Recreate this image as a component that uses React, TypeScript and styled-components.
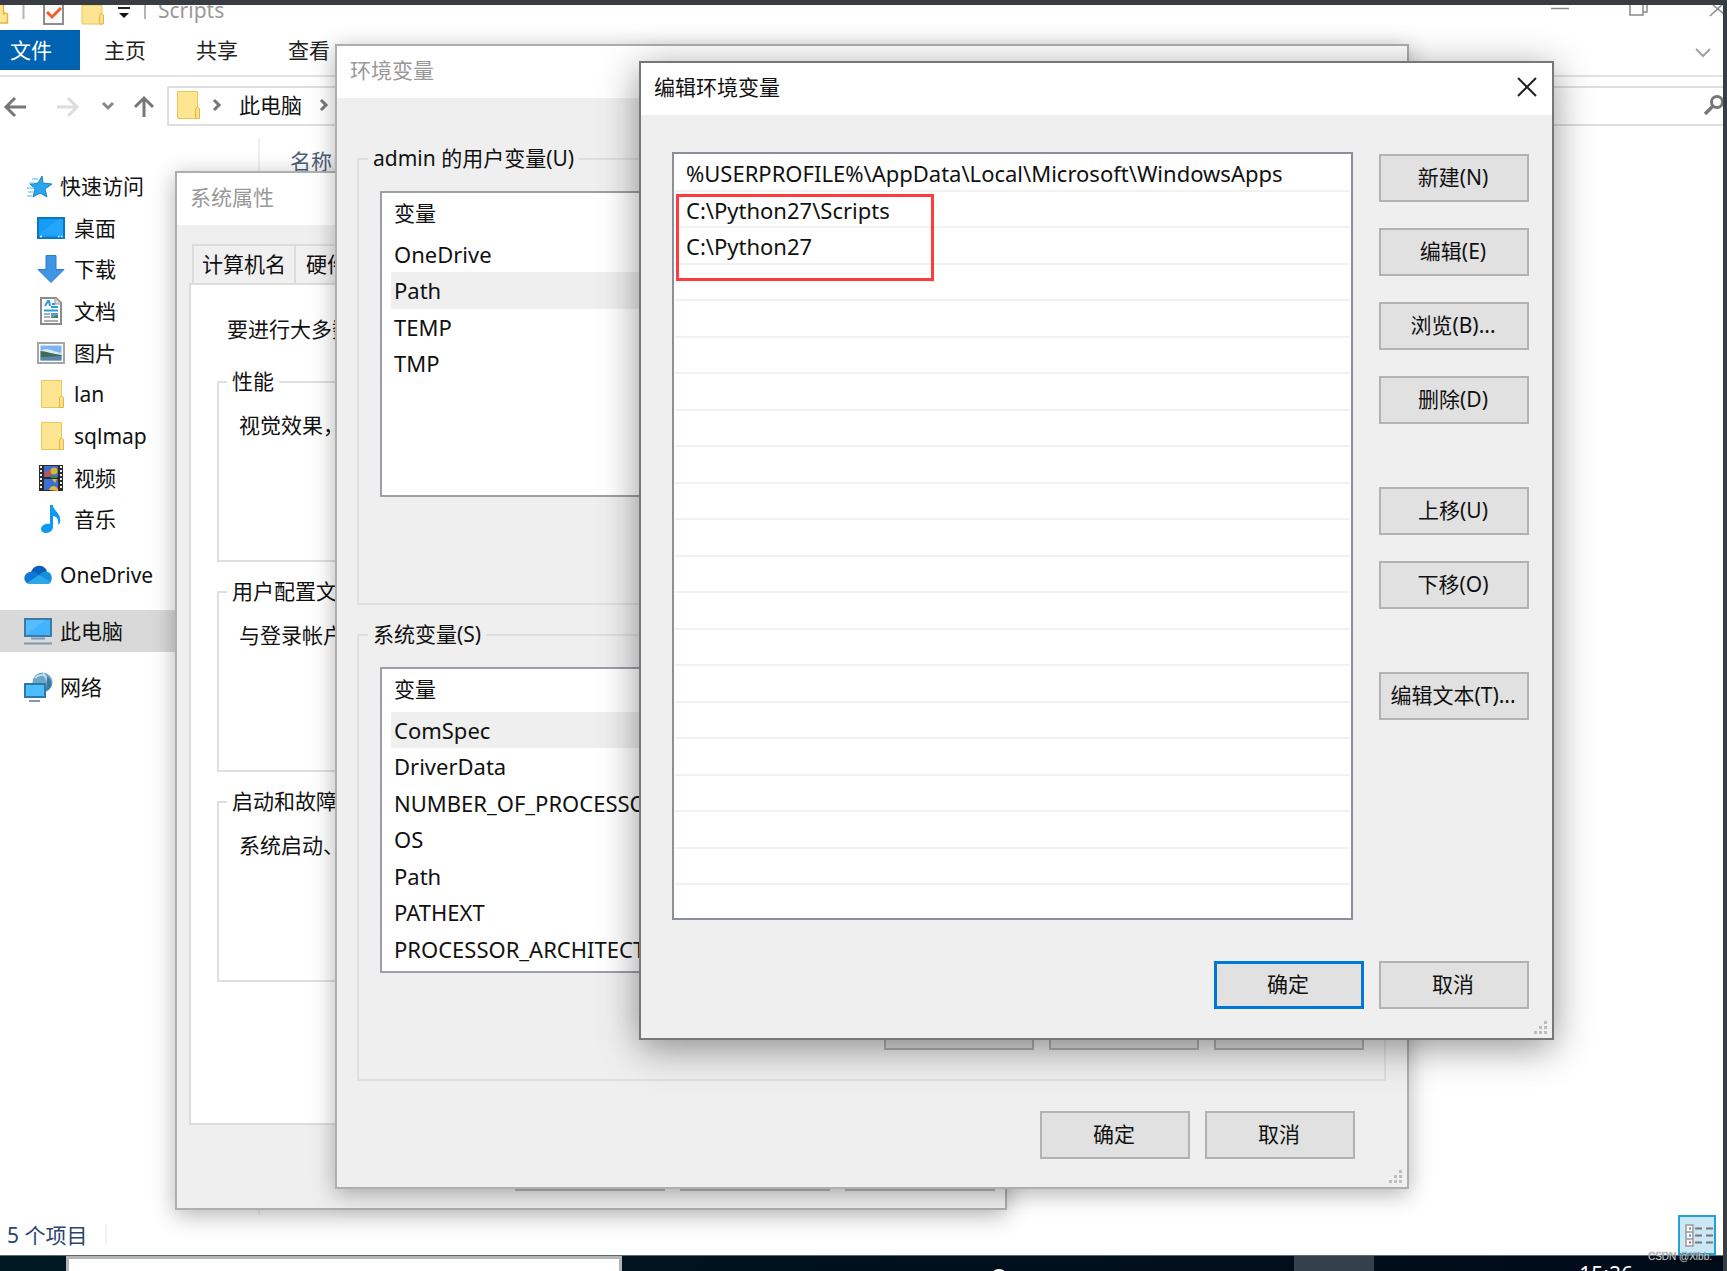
import React from "react";
import styled, { createGlobalStyle, css } from "styled-components";

const ui = `"Noto Sans", "Noto Sans CJK SC", sans-serif`;

const GlobalStyle = createGlobalStyle`
  * { box-sizing: border-box; }
  html, body, #root { height: 100%; }
  body {
    margin: 0;
    overflow: hidden;
    background: #373d42;
    color: #111;
    font-family: ${ui};
    font-size: 21px;
    line-height: 30px;
  }
  button, input { font: inherit; color: inherit; }
  ul { list-style: none; margin: 0; padding: 0; }
`;

const Desktop = styled.div`
  position: relative;
  display: flex;
  flex-direction: column;
  height: 100vh;
  padding: 5px 4px 0 0;
  overflow: hidden;
`;

/* ---------- Explorer ---------- */

const Explorer = styled.main`
  flex: 1;
  min-height: 0;
  display: flex;
  flex-direction: column;
  background: #fff;
  overflow: hidden;
`;

const CaptionBar = styled.header`
  flex: none;
  display: flex;
  height: 25px;
  overflow: hidden;
`;

const CaptionLeft = styled.div`
  flex: 1;
  display: flex;
  align-items: flex-start;
  svg { display: block; }
`;

const CaptionTitle = styled.h1`
  margin: -10px 0 0 12px;
  font-size: 21px;
  font-weight: 400;
  line-height: 30px;
  color: #999;
`;

const RibbonTabs = styled.nav`
  flex: none;
  display: flex;
  height: 47px;
  padding-right: 12px;
  border-bottom: 2px solid #e2e2e2;
  svg { margin: 18px 0 0 auto; }
`;

const RibbonTab = styled.button<{ $file?: boolean }>`
  width: ${(p) => (p.$file ? 80 : 92)}px;
  height: 40px;
  padding: 0;
  padding-right: ${(p) => (p.$file ? 18 : 2)}px;
  border: 0;
  background: ${(p) => (p.$file ? "#0063b1" : "none")};
  color: ${(p) => (p.$file ? "#fff" : "#222")};
`;

const AddressRow = styled.div`
  flex: none;
  display: flex;
  align-items: center;
  padding: 9px 0 0;
`;

const NavButtons = styled.div`
  display: flex;
  width: 167px;
  svg { display: block; }
`;

const AddressBar = styled.div`
  flex: 1;
  display: flex;
  align-items: center;
  gap: 17px;
  height: 40px;
  padding: 0 0 2px 4px;
  border: 2px solid #dedede;
  border-right: 0;
  svg:first-child { margin-right: -6px; }
  svg:last-child { margin-left: auto; }
`;

const ExplorerBody = styled.div`
  flex: 1;
  min-height: 0;
  display: flex;
`;

const Sidebar = styled.nav`
  width: 258px;
  padding-top: 39px;
  display: flex;
  flex-direction: column;
  gap: 14px;
`;

const QuickAccess = styled.ul`
  display: grid;
  grid-auto-rows: 1fr;
  height: 375px;
`;

const SideItem = styled.a<{ $child?: boolean; $active?: boolean }>`
  display: flex;
  align-items: center;
  gap: ${(p) => (p.$child ? 9 : 7)}px;
  height: 100%;
  min-height: ${(p) => (p.$child ? 41 : 42)}px;
  padding-left: ${(p) => (p.$child ? 37 : 23)}px;
  background: ${(p) => (p.$active ? "#d9d9d9" : "none")};
  color: inherit;
  text-decoration: none;
  svg { flex: none; }
`;

const FilePane = styled.section`
  flex: 1;
  margin: 12px 0 0;
  padding: 8px 30px;
  border-left: 2px solid #f0f0f0;
  color: #4c607a;
`;

const StatusBar = styled.footer`
  flex: none;
  display: flex;
  align-items: center;
  height: 40px;
  padding: 0 7px;
  color: #2b4470;
`;

const StatusCount = styled.span`
  padding-right: 18px;
  border-right: 2px solid #f2f2f2;
  line-height: 20px;
`;

const ViewToggle = styled.button`
  width: 38px;
  height: 40px;
  margin-left: auto;
  padding: 0;
  border: 2px solid #26a0da;
  background: #cce8f6;
  svg { display: block; }
`;

/* ---------- Taskbar ---------- */

const Taskbar = styled.footer`
  flex: none;
  display: flex;
  height: 16px;
  padding-left: 66px;
  overflow: hidden;
  background: linear-gradient(90deg, #001822, #000b18);
  border-top: 1px solid #5c6a72;
`;

const SearchBox = styled.input`
  width: 556px;
  height: 40px;
  border: 3px solid #b5b5b5;
  background: #fff;
`;

const TaskbarOrb = styled.span`
  width: 18px;
  height: 18px;
  margin: 13px 284px 0 368px;
  border: 2px solid #fff;
  border-radius: 50%;
`;

const TaskbarApp = styled.span`
  width: 80px;
  height: 40px;
  margin-left: 2px;
  background: #34404b;
`;

const Clock = styled.time`
  margin: 3px 90px 0 auto;
  color: #fff;
  font-size: 21px;
  line-height: 30px;
`;

const Watermark = styled.span`
  position: absolute;
  right: 15px;
  bottom: 7px;
  color: #c4c8ca;
  font-family: "Liberation Sans", sans-serif;
  font-size: 10px;
  line-height: 14px;
  text-shadow: 0 0 1px #444;
`;

/* ---------- Dialog windows ---------- */

const Dialog = styled.section<{ $x: number; $y: number; $w: number; $h: number; $active?: boolean }>`
  position: absolute;
  left: ${(p) => p.$x}px;
  top: ${(p) => p.$y}px;
  width: ${(p) => p.$w}px;
  height: ${(p) => p.$h}px;
  display: flex;
  flex-direction: column;
  background: #efefef;
  border: 2px solid ${(p) => (p.$active ? "#777" : "#aeaeae")};
  box-shadow: ${(p) =>
    p.$active ? "0 8px 36px rgba(0,0,0,.42)" : "0 5px 22px rgba(0,0,0,.3)"};
`;

const TitleBar = styled.header<{ $active?: boolean }>`
  flex: none;
  display: flex;
  align-items: center;
  justify-content: space-between;
  height: 52px;
  padding: 0 15px 4px 13px;
  background: #fff;
  color: ${(p) => (p.$active ? "#111" : "#999")};
`;

const DialogTitle = styled.h2`
  margin: 0;
  font-size: 21px;
  line-height: 30px;
  font-weight: 400;
`;

const CloseButton = styled.button`
  padding: 0;
  border: 0;
  background: none;
  svg { display: block; }
`;

const PushButton = styled.button<{ $primary?: boolean }>`
  flex: none;
  width: 150px;
  height: 48px;
  padding: 0 2px 2px 0;
  background: #e1e1e1;
  border: ${(p) => (p.$primary ? "3px solid #0078d7" : "2px solid #b2b2b2")};
`;

const ButtonRow = styled.div`
  display: flex;
  justify-content: flex-end;
  gap: 15px;
`;

const group = css`
  position: relative;
  margin: 0;
  min-width: 0;
  border: 2px solid #dfdfdf;
`;

const Legend = styled.legend`
  padding: 0 5px 2px;
  line-height: 28px;
`;

const Grip = styled.svg`
  position: absolute;
  right: 4px;
  bottom: 2px;
`;

/* System properties */

const TabStrip = styled.div`
  display: flex;
  margin: 19px 0 0 15px;
`;

const Tab = styled.button`
  height: 39px;
  padding: 0 8px 2px;
  background: #f0f0f0;
  border: 2px solid #dcdcdc;
  border-bottom: 0;
  & + & { border-left: 0; padding-left: 10px; }
`;

const TabPanel = styled.div`
  height: 842px;
  margin: 0 12px 18px;
  padding: 29px 24px 0 26px;
  background: #fff;
  border: 2px solid #dcdcdc;
`;

const PanelNote = styled.p`
  margin: 0 0 23px 10px;
`;

const SettingsGroup = styled.fieldset`
  ${group}
  height: 195px;
  margin-bottom: 15px;
  padding: 13px 20px 0;
  ${Legend} { margin-left: -12px; }
`;

const DialogFooter = styled.div`
  padding-right: 10px;
`;

/* Environment variables */

const EnvBody = styled.div`
  flex: 1;
  padding: 46px 21px 0 20px;
`;

const VariableGroup = styled.fieldset`
  ${group}
  height: 461px;
  margin-bottom: 15px;
  padding: 17px 20px 0 21px;
  ${Legend} { margin-left: -12px; }
`;

const VariableFrame = styled.div`
  height: 306px;
  margin-bottom: 29px;
  padding-left: 9px;
  background: #fff;
  border: 2px solid #9a9fa8;
`;

const VariableTable = styled.table`
  display: block;
  thead, tr { display: block; }
  tbody {
    display: grid;
    grid-template-rows: repeat(7, 1fr);
    height: 255px;
  }
  th, td { display: block; padding: 0 3px; text-align: left; font-weight: 400; }
  th { padding-bottom: 2px; line-height: 41px; }
  td { font-size: 22px; line-height: 36px; }
`;

const VariableRow = styled.tr<{ $selected?: boolean }>`
  background: ${(p) => (p.$selected ? "#efefef" : "none")};
`;

const EnvFooter = styled(ButtonRow)`
  padding: 0 52px 28px 0;
`;

/* Edit environment variable */

const EditBody = styled.div`
  flex: 1;
  display: flex;
  gap: 26px;
  padding: 37px 23px 0 31px;
`;

const PathList = styled.ul`
  position: relative;
  flex: 1;
  display: grid;
  grid-template-rows: repeat(20, 1fr);
  height: 768px;
  padding: 1px 1px 33px;
  background: #fff;
  border: 2px solid #8a8f9a;
`;

const PathItem = styled.li`
  padding-left: 11px;
  border-bottom: 2px solid #f1f1f1;
  font-size: 22px;
  line-height: 36px;
  min-height: 0;
`;

const Highlight = styled.span`
  position: absolute;
  left: 2px;
  top: 40px;
  width: 258px;
  height: 87px;
  border: 3px solid #ff3b3b;
`;

const ActionColumn = styled.div`
  display: flex;
  flex-direction: column;
  gap: 63px;
  padding-top: 2px;
`;

const ActionGroup = styled.div`
  display: flex;
  flex-direction: column;
  gap: 26px;
`;

const EditFooter = styled(ButtonRow)`
  padding: 0 23px 29px 0;
`;

/* ---------- Icons ---------- */

const Folder = () => (
  <svg width="28" height="28" viewBox="0 0 28 28">
    <path d="M4.500 .5h20v27h-20z" fill="#ffe491" stroke="#eac65a" />
    <path d="M22.500 17.500l2-1.500 2 1.500v10h-4z" fill="#ffe08a" stroke="#e2b840" />
  </svg>
);

const Star = () => (
  <svg width="30" height="24" viewBox="0 0 30 24">
    <path d="M19 2l1 7 9 1-7 5 2 8-7-4-7 4 2-8-5-5 8-1z" fill="#2aa4ea" stroke="#1787cc" />
    <path d="M9 5h6M6 9h5M4 14h7M5 18h6M4 22h5" stroke="#8ccdf4" strokeWidth="1.500" />
  </svg>
);

const DesktopIcon = () => (
  <svg width="28" height="22" viewBox="0 0 28 22">
    <path d="M1 1h26v20H1z" fill="#159df5" stroke="#0878bd" strokeWidth="2" />
    <path d="M2 17L22 2h4v16H2z" fill="#2faaff" opacity=".6" />
    <path d="M3 19.500h2M21 19.500h1.500M24 19.500h1.500" stroke="#fff" strokeWidth="1.500" />
  </svg>
);

const Download = () => (
  <svg width="28" height="28" viewBox="0 0 28 28">
    <path d="M9 .5h10v14h8L14 27.500 1 14.500h8z" fill="#3d95e4" stroke="#2a7fcd" />
  </svg>
);

const Doc = () => (
  <svg width="28" height="28" viewBox="0 0 28 28">
    <path d="M4 1h15l5 5v21H4z" fill="#fdfdfd" stroke="#8b8b8b" strokeWidth="2" />
    <path d="M18 1v6h6" fill="#ddd" stroke="#999" />
    <path d="M8 9l3-5h1l1 5M15 7h3M14 10h7M7 13.500h14" stroke="#2a9bdc" strokeWidth="2" fill="none" />
    <path d="M7 17h6M7 20h6M7 24h14" stroke="#8a949c" strokeWidth="1.500" />
    <path d="M14 16h7v5h-7z" fill="#5d9cc7" />
    <path d="M14 21l7-3v3z" fill="#3f7d55" />
  </svg>
);

const Picture = () => (
  <svg width="28" height="22" viewBox="0 0 28 22">
    <path d="M1 1h26v20H1z" fill="#fff" stroke="#a5a5a5" strokeWidth="2" />
    <path d="M3.500 3.500h21v15h-21z" fill="#7fb4f0" />
    <path d="M3.500 9c6-4 11 0 21 2v3h-21z" fill="#d7ebf5" />
    <path d="M3.500 9c5 0 12 3 21 4v2h-21z" fill="#3d6b58" />
    <path d="M3.500 15l21-1v4.500h-21z" fill="#5a86a8" />
  </svg>
);

const Film = () => (
  <svg width="28" height="28" viewBox="0 0 28 28">
    <path d="M2 1h24v26H2z" fill="#2b2b2b" />
    <path d="M4 2v24M24 2v24" stroke="#eee" strokeWidth="2" strokeDasharray="2 2" />
    <path d="M7 2h14v11H7zM7 15h14v11H7z" fill="#3d6fd1" />
    <path d="M8 8l5-2 2 5-7 2z" fill="#c8504a" />
    <circle cx="17" cy="7" r="3.500" fill="#d9b92c" />
    <path d="M15 15h5l-2 4zM12 26c2-5 6-5 9-1v2z" fill="#e3bb35" />
    <path d="M14 12h6v2h-6z" fill="#3c8b3f" />
  </svg>
);

const Music = () => (
  <svg width="28" height="28" viewBox="0 0 28 28">
    <path d="M13 0h3c0 6 9 8 7 18l-2 2c1-6-1-8-5-9v11c0 3-3 6-7 6-3 0-5-2-5-4 0-3 4-6 9-5z" fill="#0d99f5" />
  </svg>
);

const OneDriveIcon = () => (
  <svg width="30" height="20" viewBox="0 0 30 20">
    <path d="M8 7C11-1 21-1 24 6l-5 7-13 5z" fill="#0a5db8" />
    <path d="M7 19C-1 18 0 8 7 7c4-1 7 0 9 3l-9 9z" fill="#1078d4" />
    <path d="M16 10c3-4 7-4 9-3 5 1 5 11 0 12h-5z" fill="#1490df" />
    <path d="M4 18l12-8 12 7c-1 1-2 2-4 2H8c-2 0-3 0-4-1z" fill="#2aa8ea" />
  </svg>
);

const Computer = () => (
  <svg width="30" height="28" viewBox="0 0 30 28">
    <path d="M2 2h26v17H2z" fill="#55bdfb" stroke="#3c7ba5" strokeWidth="2" />
    <path d="M3 18L23 3h4v15z" fill="#2fabff" opacity=".55" />
    <path d="M8 21.500h14M1 26.500h28" stroke="#7d99b3" strokeWidth="2" />
  </svg>
);

const Network = () => (
  <svg width="30" height="30" viewBox="0 0 30 30">
    <circle cx="19.500" cy="10.500" r="10" fill="#6aa9c6" />
    <path d="M12 6c5-5 11-3 13 1M20 1c6 7 5 13 2 19" stroke="#cfe6ef" strokeWidth="1.500" fill="none" />
    <path d="M24 4c6 5 6 12-1 15z" fill="#39799c" />
    <path d="M2 12h20v13H2z" fill="#4dbcff" stroke="#2e77a6" strokeWidth="2" />
    <path d="M6 29h11" stroke="#7d99b3" strokeWidth="2" />
  </svg>
);

const Chevron = () => (
  <svg width="10" height="14" viewBox="0 0 10 14">
    <path d="M2 2l5 5-5 5" fill="none" stroke="#777" strokeWidth="3" />
  </svg>
);

const SizeGrip = () => (
  <Grip width="15" height="15" viewBox="0 0 15 15" fill="#bdbdbd">
    <path d="M11 0h3v3h-3zM6 5h3v3H6zM11 5h3v3h-3zM1 10h3v3H1zM6 10h3v3H6zM11 10h3v3h-3z" />
  </Grip>
);

/* ---------- Data ---------- */

const quickItems = [
  { label: "桌面", icon: <DesktopIcon /> },
  { label: "下载", icon: <Download /> },
  { label: "文档", icon: <Doc /> },
  { label: "图片", icon: <Picture /> },
  { label: "lan", icon: <Folder /> },
  { label: "sqlmap", icon: <Folder /> },
  { label: "视频", icon: <Film /> },
  { label: "音乐", icon: <Music /> },
];

const settings = [
  { title: "性能", text: "视觉效果，" },
  { title: "用户配置文件", text: "与登录帐户" },
  { title: "启动和故障恢复", text: "系统启动、" },
];

const userVars = ["OneDrive", "Path", "TEMP", "TMP"];
const systemVars = [
  "ComSpec",
  "DriverData",
  "NUMBER_OF_PROCESSORS",
  "OS",
  "Path",
  "PATHEXT",
  "PROCESSOR_ARCHITECTURE",
];

const paths = [
  "%USERPROFILE%\\AppData\\Local\\Microsoft\\WindowsApps",
  "C:\\Python27\\Scripts",
  "C:\\Python27",
];
const pathSlots = Array.from({ length: 20 }, (_, i) => paths[i] ?? "");

const actions = [
  ["新建(N)", "编辑(E)", "浏览(B)...", "删除(D)"],
  ["上移(U)", "下移(O)"],
  ["编辑文本(T)..."],
];

function Variables({ names, selected }: { names: string[]; selected: string }) {
  return (
    <VariableFrame>
      <VariableTable>
        <thead>
          <tr>
            <th scope="col">变量</th>
          </tr>
        </thead>
        <tbody>
          {names.map((name) => (
            <VariableRow key={name} $selected={name === selected}>
              <td>{name}</td>
            </VariableRow>
          ))}
        </tbody>
      </VariableTable>
    </VariableFrame>
  );
}

function ExplorerWindow() {
  return (
    <Explorer>
      <CaptionBar>
        <CaptionLeft>
          <svg width="146" height="25" viewBox="0 0 146 25" fill="none">
            <path d="M0 0h4v18H0z" fill="#ffe491" />
            <path d="M3.500 0v9l2-1 2 1v9H0" fill="#ffe491" stroke="#e2b840" strokeWidth="1.500" />
            <path d="M23.500 0v14M145 0v14" stroke="#b5b5b5" strokeWidth="2" />
            <path d="M44 0v19h19V0" fill="#fafafa" stroke="#8e8e8e" strokeWidth="2" />
            <path d="M47 7l5 5 9-9" stroke="#f0622a" strokeWidth="3" />
            <path d="M82 0v19h20V0z" fill="#ffe491" stroke="#eac65a" />
            <path d="M99.500 19V10l2-1.500 2 1.500v9z" fill="#ffe08a" stroke="#e2b840" />
            <path d="M118 3h12" stroke="#222" strokeWidth="2" />
            <path d="M119 8h10l-5 5z" fill="#111" />
          </svg>
          <CaptionTitle>Scripts</CaptionTitle>
        </CaptionLeft>
        <svg width="172" height="20" viewBox="0 0 172 20" fill="none" stroke="#8a8a8a" strokeWidth="1.500">
          <path d="M0 3.500h18M79 0v10h13V0M92 7h4V0M159 11l14-13M162 0l11 9" />
        </svg>
      </CaptionBar>
      <RibbonTabs>
        <RibbonTab $file>文件</RibbonTab>
        <RibbonTab>主页</RibbonTab>
        <RibbonTab>共享</RibbonTab>
        <RibbonTab>查看</RibbonTab>
        <svg width="16" height="11" viewBox="0 0 16 11" fill="none">
          <path d="M1 1l7 7 7-7" stroke="#a0a0a0" strokeWidth="2" />
        </svg>
      </RibbonTabs>
      <AddressRow>
        <NavButtons>
          <svg width="160" height="24" viewBox="0 0 160 24" fill="none" strokeWidth="3">
            <path d="M26 13H7M15 4l-9 9 9 9" stroke="#777" />
            <path d="M57 13h19M68 4l9 9-9 9" stroke="#ddd" />
            <path d="M103 9l5 5 5-5" stroke="#888" />
            <path d="M144 23V4M135 13l9-9 9 9" stroke="#777" />
          </svg>
        </NavButtons>
        <AddressBar>
          <Folder />
          <Chevron />
          <span>此电脑</span>
          <Chevron />
          <svg width="20" height="22" viewBox="0 0 20 22" fill="none" stroke="#777">
            <circle cx="14" cy="8" r="5.500" strokeWidth="3" />
            <path d="M10 12l-8 8" strokeWidth="3.500" />
          </svg>
        </AddressBar>
      </AddressRow>
      <ExplorerBody>
        <Sidebar>
          <QuickAccess>
            <li>
              <SideItem href="#"><Star />快速访问</SideItem>
            </li>
            {quickItems.map((item) => (
              <li key={item.label}>
                <SideItem href="#" $child>{item.icon}{item.label}</SideItem>
              </li>
            ))}
          </QuickAccess>
          <div><SideItem href="#"><OneDriveIcon />OneDrive</SideItem></div>
          <div><SideItem href="#" $active><Computer />此电脑</SideItem></div>
          <div><SideItem href="#"><Network />网络</SideItem></div>
        </Sidebar>
        <FilePane>名称</FilePane>
      </ExplorerBody>
      <StatusBar>
        <StatusCount>5 个项目</StatusCount>
        <ViewToggle aria-label="详细信息">
          <svg width="34" height="36" viewBox="0 0 34 36" fill="none">
            <path d="M6 8h7v21H6zM6 15h7M6 22h7" fill="#fff" stroke="#999" strokeWidth="1.500" />
            <path d="M15 11.500h7M26 11.500h7M15 18.500h7M26 18.500h7M15 25.500h7M26 25.500h7" stroke="#777" strokeWidth="2" />
            <path d="M9 11.500h2" stroke="#5a9a6a" strokeWidth="2" />
            <path d="M9 18.500h2" stroke="#4a8ae0" strokeWidth="2" />
            <path d="M9 25.500h2" stroke="#e04a4a" strokeWidth="2" />
          </svg>
        </ViewToggle>
      </StatusBar>
    </Explorer>
  );
}

export default function App() {
  return (
    <>
      <GlobalStyle />
      <Desktop>
        <ExplorerWindow />
        <Taskbar>
          <SearchBox aria-label="搜索" />
          <TaskbarOrb />
          <TaskbarApp />
          <Clock>15:26</Clock>
        </Taskbar>

        <Dialog $x={175} $y={171} $w={832} $h={1039}>
          <TitleBar>
            <DialogTitle>系统属性</DialogTitle>
          </TitleBar>
          <TabStrip>
            <Tab>计算机名</Tab>
            <Tab>硬件</Tab>
          </TabStrip>
          <TabPanel>
            <PanelNote>要进行大多数</PanelNote>
            {settings.map((s) => (
              <SettingsGroup key={s.title}>
                <Legend>{s.title}</Legend>
                {s.text}
              </SettingsGroup>
            ))}
          </TabPanel>
          <DialogFooter>
            <ButtonRow>
              <PushButton aria-label="确定" />
              <PushButton aria-label="取消" />
              <PushButton aria-label="应用" />
            </ButtonRow>
          </DialogFooter>
        </Dialog>

        <Dialog $x={335} $y={44} $w={1074} $h={1145}>
          <TitleBar>
            <DialogTitle>环境变量</DialogTitle>
          </TitleBar>
          <EnvBody>
            <VariableGroup>
              <Legend>admin 的用户变量(U)</Legend>
              <Variables names={userVars} selected="Path" />
            </VariableGroup>
            <VariableGroup>
              <Legend>系统变量(S)</Legend>
              <Variables names={systemVars} selected="ComSpec" />
              <ButtonRow>
                <PushButton aria-label="新建" />
                <PushButton aria-label="编辑" />
                <PushButton aria-label="删除" />
              </ButtonRow>
            </VariableGroup>
          </EnvBody>
          <EnvFooter>
            <PushButton>确定</PushButton>
            <PushButton>取消</PushButton>
          </EnvFooter>
          <SizeGrip />
        </Dialog>

        <Dialog $x={639} $y={61} $w={915} $h={979} $active>
          <TitleBar $active>
            <DialogTitle>编辑环境变量</DialogTitle>
            <CloseButton aria-label="关闭">
              <svg width="20" height="20" viewBox="0 0 20 20" fill="none">
                <path d="M1 1l18 18M19 1L1 19" stroke="#222" strokeWidth="2" />
              </svg>
            </CloseButton>
          </TitleBar>
          <EditBody>
            <PathList>
              {pathSlots.map((p, i) => (
                <PathItem key={i}>{p}</PathItem>
              ))}
              <Highlight />
            </PathList>
            <ActionColumn>
              {actions.map((labels) => (
                <ActionGroup key={labels[0]}>
                  {labels.map((label) => (
                    <PushButton key={label}>{label}</PushButton>
                  ))}
                </ActionGroup>
              ))}
            </ActionColumn>
          </EditBody>
          <EditFooter>
            <PushButton $primary>确定</PushButton>
            <PushButton>取消</PushButton>
          </EditFooter>
          <SizeGrip />
        </Dialog>

        <Watermark>CSDN @Xlbb.</Watermark>
      </Desktop>
    </>
  );
}
